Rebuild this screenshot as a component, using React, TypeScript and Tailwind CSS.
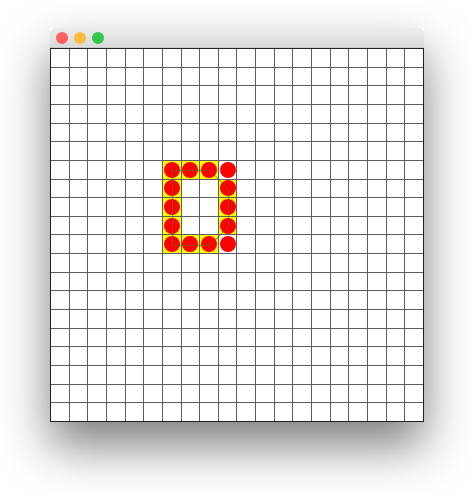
import React from "react";

const N = 20;
const yellow = new Set<string>([
  "6,6", "6,7", "6,8",
  "7,6", "8,6", "9,6",
  "10,6", "10,7", "10,8",
  "7,9", "8,9", "9,9",
]);
const circles = new Set<string>([
  "6,6", "6,7", "6,8", "6,9",
  "7,6", "7,9", "8,6", "8,9", "9,6", "9,9",
  "10,6", "10,7", "10,8", "10,9",
]);

const C = 374 / N;
const pts: [number, number][] = [
  [6, 6], [8, 6], [9, 7], [9, 9], [8, 10], [6, 10], [6, 6],
];

export default function App() {
  const cells = [];
  for (let r = 0; r < N; r++) {
    for (let c = 0; c < N; c++) {
      const k = `${r},${c}`;
      cells.push(
        <div
          key={k}
          className={`relative flex items-center justify-center border-r border-b border-[#5e5e5e] ${
            yellow.has(k) ? "bg-[#ffff00]" : "bg-white"
          }`}
        >
          {circles.has(k) && (
            <div className="h-[16px] w-[16px] rounded-full bg-[#ff0000]" />
          )}
        </div>
      );
    }
  }
  return (
    <div className="h-[493px] w-[474px] bg-white pl-[50px] pt-[28px]" style={{ fontFamily: '"Liberation Sans", sans-serif' }}>
      <div className="flex w-[374px] flex-col shadow-[0_24px_45px_rgba(0,0,0,0.5)]">
        <div className="flex h-[20px] items-center gap-[6px] rounded-t-[5px] border-b border-[#c8c8c8] bg-gradient-to-b from-[#ededed] to-[#dadada] pl-[6px]">
          <span className="h-[12px] w-[12px] rounded-full bg-[#fc605c]" />
          <span className="h-[12px] w-[12px] rounded-full bg-[#fdbc40]" />
          <span className="h-[12px] w-[12px] rounded-full bg-[#34c84a]" />
        </div>
        <div className="relative h-[374px] w-[374px] border-l border-t border-[#222]">
          <div className="grid h-full w-full grid-cols-20 grid-rows-20">
            {cells}
          </div>
          <svg className="pointer-events-none absolute inset-0" width="374" height="374" viewBox="0 0 374 374">
            <polyline
              points={pts.map(([c, r]) => `${c * C + C / 2},${r * C + C / 2}`).join(" ")}
              fill="none"
              stroke="#6a5f2a"
              strokeWidth="1"
              strokeLinejoin="round"
              opacity="0.8"
            />
          </svg>
          <div className="pointer-events-none absolute inset-y-0 right-0 w-px bg-[#222]" />
          <div className="pointer-events-none absolute inset-x-0 bottom-0 h-px bg-[#222]" />
        </div>
      </div>
    </div>
  );
}
